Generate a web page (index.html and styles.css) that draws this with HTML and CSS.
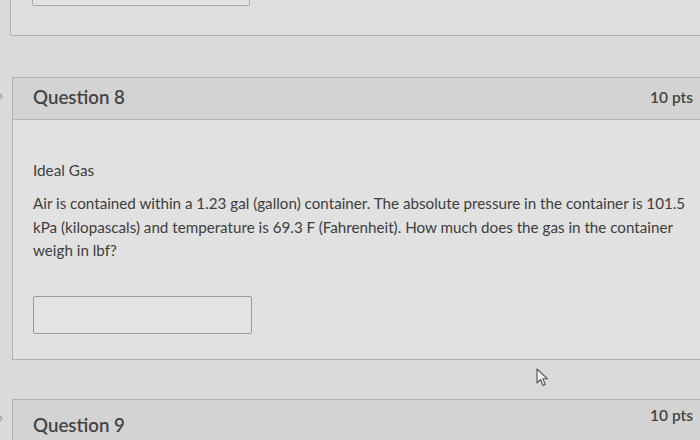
FILE: index.html
```html
<!DOCTYPE html>
<html>
<head>
<meta charset="utf-8">
<link rel="stylesheet" href="styles.css">
</head>
<body>
<div class="page">
  <div class="prev-card">
    <div class="prev-input"></div>
  </div>

  <div class="question q8">
    <span class="side-mark">›</span>
    <div class="q-header">
      <span class="q-title">Question 8</span>
      <span class="q-pts">10 pts</span>
    </div>
    <div class="q-body">
      <p class="q-sub">Ideal Gas</p>
      <p class="q-text">Air is contained within a 1.23 gal (gallon) container. The absolute pressure in the container is 101.5 kPa (kilopascals) and temperature is 69.3 F (Fahrenheit). How much does the gas in the container weigh in lbf?</p>
      <div class="answer"></div>
    </div>
  </div>

  <div class="question q9">
    <span class="side-mark">›</span>
    <div class="q-header">
      <span class="q-title">Question 9</span>
      <span class="q-pts top">10 pts</span>
    </div>
  </div>

  <svg class="cursor" width="14" height="20" viewBox="0 0 14 20">
    <path d="M1 1 L1 15 L4.5 11.5 L7 17.5 L9.3 16.5 L6.8 10.8 L11.5 10.8 Z" fill="#f2f2f2" stroke="#555" stroke-width="1.1" stroke-linejoin="round"/>
  </svg>
</div>
</body>
</html>
```

FILE: styles.css
```css
html, body {
  margin: 0;
  padding: 0;
}
body {
  background: #dadada;
  font-family: Lato, "Open Sans", sans-serif;
  color: #3d3d3d;
  width: 700px;
  height: 440px;
  overflow: hidden;
}
.page {
  position: relative;
  width: 700px;
  height: 440px;
}
.prev-card {
  margin-left: 10px;
  height: 35px;
  border-left: 1px solid #b4b4b4;
  border-bottom: 1px solid #b0b0b0;
  background: #dedede;
  padding-left: 21px;
}
.prev-input {
  width: 216px;
  height: 5px;
  border: 1px solid #a8a8a8;
  border-top: none;
  border-radius: 0 0 2px 2px;
  background: #e2e2e2;
}
.question {
  position: relative;
  margin-left: 12px;
  border: 1px solid #b3b3b3;
  border-right: none;
}
.q8 {
  margin-top: 41px;
}
.q9 {
  margin-top: 39px;
  border-bottom: none;
}
.side-mark {
  position: absolute;
  left: -14px;
  top: 8px;
  font-size: 14px;
  color: #888;
}
.q-header {
  display: flex;
  justify-content: space-between;
  align-items: center;
  height: 42px;
  padding: 0 7px 4px 20px;
  box-sizing: border-box;
  background: #d3d3d3;
  border-bottom: 1px solid #b5b5b5;
}
.q9 .q-header {
  border-bottom: none;
  height: 44px;
  padding-bottom: 0;
  align-items: flex-start;
}
.q-title {
  font-size: 18.7px;
  font-weight: 600;
  color: #444;
}
.q9 .q-title {
  margin-top: 14px;
}
.q-pts {
  font-size: 15.5px;
  font-weight: 600;
  color: #444;
}
.q-pts.top {
  margin-top: 6px;
}
.q-body {
  background: #e1e1e1;
  padding: 39px 10px 25px 20px;
}
.q-sub {
  margin: 0 0 10px 0;
  font-size: 15.3px;
  line-height: 23px;
}
.q-text {
  margin: 0;
  font-size: 15.2px;
  line-height: 23.5px;
}
.answer {
  margin-top: 33px;
  width: 217px;
  height: 36px;
  border: 1px solid #9a9a9a;
  border-radius: 2px;
  background: #e3e3e3;
}
.cursor {
  position: absolute;
  left: 536px;
  top: 368px;
}
```
